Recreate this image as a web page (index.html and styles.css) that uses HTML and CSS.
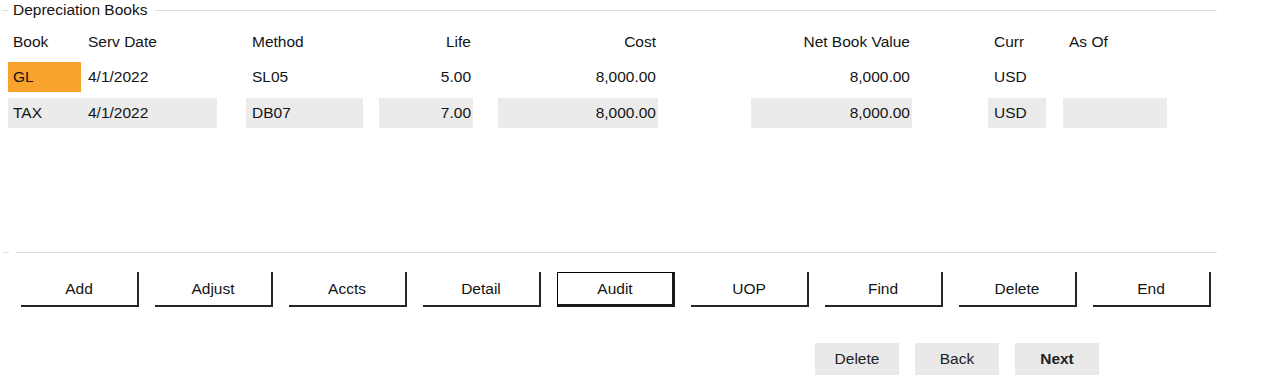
FILE: index.html
```html
<!DOCTYPE html>
<html>
<head>
<meta charset="utf-8">
<link rel="stylesheet" href="styles.css">
</head>
<body>
<div class="page">
  <div class="group-head">
    <span class="dash"></span>
    <span class="legend">Depreciation Books</span>
    <span class="rule"></span>
  </div>
  <div class="table">
    <div class="row head">
      <div class="cell c-book">Book</div>
      <div class="cell c-date">Serv Date</div>
      <div class="cell c-method">Method</div>
      <div class="cell c-life num">Life</div>
      <div class="cell c-cost num">Cost</div>
      <div class="cell c-nbv num">Net Book Value</div>
      <div class="cell c-curr">Curr</div>
      <div class="cell c-asof">As Of</div>
    </div>
    <div class="row">
      <div class="cell c-book sel">GL</div>
      <div class="cell c-date">4/1/2022</div>
      <div class="cell c-method">SL05</div>
      <div class="cell c-life num">5.00</div>
      <div class="cell c-cost num">8,000.00</div>
      <div class="cell c-nbv num">8,000.00</div>
      <div class="cell c-curr">USD</div>
      <div class="cell c-asof"></div>
    </div>
    <div class="row">
      <div class="cell c-book ro">TAX</div>
      <div class="cell c-date ro">4/1/2022</div>
      <div class="cell c-method ro">DB07</div>
      <div class="cell c-life num ro">7.00</div>
      <div class="cell c-cost num ro">8,000.00</div>
      <div class="cell c-nbv num ro">8,000.00</div>
      <div class="cell c-curr ro">USD</div>
      <div class="cell c-asof ro"></div>
    </div>
  </div>
  <div class="sep">
    <span class="dash"></span>
    <span class="rule"></span>
  </div>
  <div class="actions">
    <button class="btn">Add</button>
    <button class="btn">Adjust</button>
    <button class="btn">Accts</button>
    <button class="btn">Detail</button>
    <button class="btn focus">Audit</button>
    <button class="btn">UOP</button>
    <button class="btn">Find</button>
    <button class="btn">Delete</button>
    <button class="btn">End</button>
  </div>
  <div class="nav">
    <button class="nbtn">Delete</button>
    <button class="nbtn">Back</button>
    <button class="nbtn strong">Next</button>
  </div>
</div>
</body>
</html>
```

FILE: styles.css
```css
* { box-sizing: border-box; }
html, body { margin: 0; padding: 0; background: #fff; }
body {
  font-family: "Liberation Sans", Arial, sans-serif;
  font-size: 15.5px;
  color: #141414;
}
.page { width: 1266px; height: 384px; }

.group-head {
  width: 1217px;
  height: 20px;
  display: flex;
  align-items: center;
}
.dash { display: block; height: 1px; background: #d6dfe8; }
.group-head .dash { margin-left: 2px; width: 6px; }
.legend { padding: 0 8px 0 5px; line-height: 18px; white-space: nowrap; }
.rule { display: block; flex: 1; height: 1px; background: #d6dfe8; }

.table { margin-top: 7px; display: flex; flex-direction: column; gap: 6px; }
.table .head { margin-bottom: -1px; }
.row { display: flex; height: 30px; margin-left: 8px; }
.cell { height: 30px; line-height: 30px; white-space: nowrap; }
.num { text-align: right; padding-right: 2px; }
.c-book { width: 73px; padding-left: 5px; }
.c-date { width: 136px; padding-left: 7px; }
.c-method { width: 117px; margin-left: 29px; padding-left: 6px; }
.c-life { width: 94px; margin-left: 16px; }
.c-cost { width: 160px; margin-left: 25px; }
.c-nbv { width: 161px; margin-left: 93px; }
.c-curr { width: 58px; margin-left: 76px; padding-left: 6px; }
.c-asof { width: 104px; margin-left: 17px; padding-left: 6px; }
.sel { background: #f8a32b; }
.ro { background: #ebebeb; }

.sep {
  width: 1217px;
  margin-top: 124px;
  display: flex;
  align-items: center;
  height: 1px;
}
.sep .dash { margin-left: 3px; width: 6px; margin-right: 7px; }

.actions {
  margin-top: 19px;
  margin-left: 21px;
  display: flex;
  gap: 16px;
}
.btn {
  width: 118px;
  height: 35px;
  font: inherit;
  color: #141414;
  background: #fff;
  border: 0;
  border-right: 2px solid #262626;
  border-bottom: 2px solid #262626;
  padding: 0;
  padding-top: 1px;
}
.btn.focus {
  border: 1px solid #000;
  border-right: 3px solid #1a1a1a;
  border-bottom: 3px solid #1a1a1a;
}

.nav {
  margin-top: 36px;
  margin-left: 815px;
  display: flex;
  gap: 16px;
}
.nbtn {
  width: 84px;
  height: 32px;
  font: inherit;
  color: #222;
  background: #e9e9e9;
  border: 0;
  padding: 0;
}
.nbtn.strong { font-weight: bold; }
```
